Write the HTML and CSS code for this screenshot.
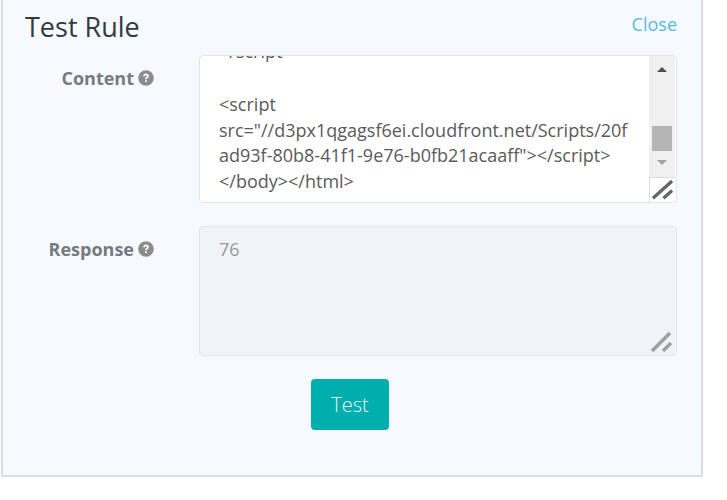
FILE: index.html
```html
<!DOCTYPE html>
<html lang="en-US">
  <head>
    <title>Test Rule</title>
    <meta charset="utf-8" />
    <link rel="stylesheet" href="styles.css">
  </head>
  <body>
    <main class="panel">
      <header class="panel-head">
        <h1>Test Rule</h1>
        <a class="close">Close</a>
      </header>
      <section class="row row-content">
        <label class="row-label">
          Content
          <svg class="help" viewBox="0 0 16 16"><circle cx="8" cy="8" r="7.8" fill="#8c8c8c" /><path d="M5.2 6.2c0-1.6 1.2-2.6 2.9-2.6 1.6 0 2.8 1 2.8 2.4 0 1-.6 1.6-1.3 2.1-.5.3-.7.6-.7 1.1H7c0-1 .3-1.5 1-2 .5-.3.9-.6.9-1.1 0-.5-.3-.8-.9-.8-.6 0-.9.4-1 1zM7 10.2h1.9v1.9H7z" fill="#f6fafe" /></svg>
        </label>
        <div class="box box-content">
          <div class="box-text">
            <div class="line-cut">&lt;/script&gt;</div>
            <div>&nbsp;</div>
            <div>&lt;script</div>
            <div>src="//d3px1qgagsf6ei.cloudfront.net/Scripts/20f</div>
            <div>ad93f-80b8-41f1-9e76-b0fb21acaaff"&gt;&lt;/script&gt;</div>
            <div>&lt;/body&gt;&lt;/html&gt;</div>
          </div>
          <div class="scrollbar">
            <span class="arrow arrow-up"></span>
            <span class="thumb"></span>
            <span class="arrow arrow-down"></span>
            <span class="corner">
              <svg viewBox="0 0 26 25"><path d="M3 21 23 3M14 21l9-8" stroke="#666" stroke-width="3.5" fill="none" /></svg>
            </span>
          </div>
        </div>
      </section>
      <section class="row row-response">
        <label class="row-label">
          Response
          <svg class="help" viewBox="0 0 16 16"><circle cx="8" cy="8" r="7.8" fill="#8c8c8c" /><path d="M5.2 6.2c0-1.6 1.2-2.6 2.9-2.6 1.6 0 2.8 1 2.8 2.4 0 1-.6 1.6-1.3 2.1-.5.3-.7.6-.7 1.1H7c0-1 .3-1.5 1-2 .5-.3.9-.6.9-1.1 0-.5-.3-.8-.9-.8-.6 0-.9.4-1 1zM7 10.2h1.9v1.9H7z" fill="#f6fafe" /></svg>
        </label>
        <div class="box box-response">
          <div class="response-text">76</div>
          <svg class="grip" viewBox="0 0 24 24"><path d="M2 22 20 4M13 22l8-8" stroke="#a0a0a0" stroke-width="3.5" fill="none" /></svg>
        </div>
      </section>
      <div class="actions">
        <button class="test-btn">Test</button>
      </div>
    </main>
  </body>
</html>
```

FILE: styles.css
```css
html {
  box-sizing: border-box;
}
body {
  margin: 0;
  background: #fff;
  font-family: "Open Sans", Arial, sans-serif;
  font-size: 18px;
  color: #555;
}
h1 {
  margin: 0;
  font-size: 27px;
  font-weight: 400;
  line-height: 33px;
  color: #333a42;
}
.panel {
  box-sizing: border-box;
  width: 702px;
  height: 477px;
  margin-left: 1px;
  padding: 10px 24px 0 22px;
  background-color: #f6fafe;
  border: 2px solid #dcdcdc;
  border-top: none;
}
.panel-head {
  display: flex;
  justify-content: space-between;
  height: 45px;
}
.close {
  font-size: 18px;
  line-height: 29px;
  color: #55bcdc;
}
.row {
  display: flex;
}
.row-content {
  height: 148px;
}
.row-response {
  height: 130px;
  margin-top: 23px;
}
.row-label {
  display: flex;
  justify-content: flex-end;
  align-items: center;
  gap: 4px;
  box-sizing: border-box;
  width: 174px;
  height: 46px;
  padding-right: 45px;
  font-size: 18px;
  font-weight: 700;
  color: #777b80;
}
.help {
  width: 16px;
  height: 16px;
}
.box {
  flex: 1;
  position: relative;
  box-sizing: border-box;
  border: 1px solid #e1e6eb;
  border-radius: 4px;
  overflow: hidden;
}
.box-content {
  display: flex;
  background: #fff;
}
.box-text {
  flex: 1;
  display: flex;
  flex-direction: column;
  justify-content: flex-end;
  padding: 0 19px 8px;
  line-height: 25.4px;
  color: #5a5a5a;
  white-space: nowrap;
}
.line-cut {
  margin-bottom: 3px;
}
.scrollbar {
  position: relative;
  width: 26px;
  margin-right: 1px;
  background: #f0f0f0;
}
.arrow {
  position: absolute;
  left: 8px;
  width: 0;
  height: 0;
  border-left: 5px solid transparent;
  border-right: 5px solid transparent;
}
.arrow-up {
  top: 11px;
  border-bottom: 5px solid #505050;
}
.arrow-down {
  top: 104px;
  border-top: 5px solid #a3a3a3;
}
.thumb {
  position: absolute;
  top: 70px;
  left: 3px;
  width: 20px;
  height: 25px;
  background: #b4b4b4;
}
.corner {
  position: absolute;
  bottom: 0;
  left: 0;
  width: 26px;
  height: 25px;
  background: #fff;
  border-left: 1px solid #dcdcdc;
  border-top: 1px solid #dcdcdc;
  box-sizing: border-box;
}
.corner svg {
  display: block;
  width: 100%;
  height: 100%;
}
.box-response {
  background: #f0f3f8;
}
.response-text {
  padding: 10px 19px;
  line-height: 25px;
  color: #999;
}
.grip {
  position: absolute;
  right: 2px;
  bottom: 2px;
  width: 24px;
  height: 24px;
}
.actions {
  display: flex;
  margin-top: 23px;
  padding-left: 286px;
}
.test-btn {
  width: 78px;
  height: 51px;
  padding: 0;
  border: none;
  border-radius: 4px;
  background: #00aeae;
  color: #e6f7f7;
  font-family: inherit;
  font-size: 20px;
  font-weight: 300;
}
```
